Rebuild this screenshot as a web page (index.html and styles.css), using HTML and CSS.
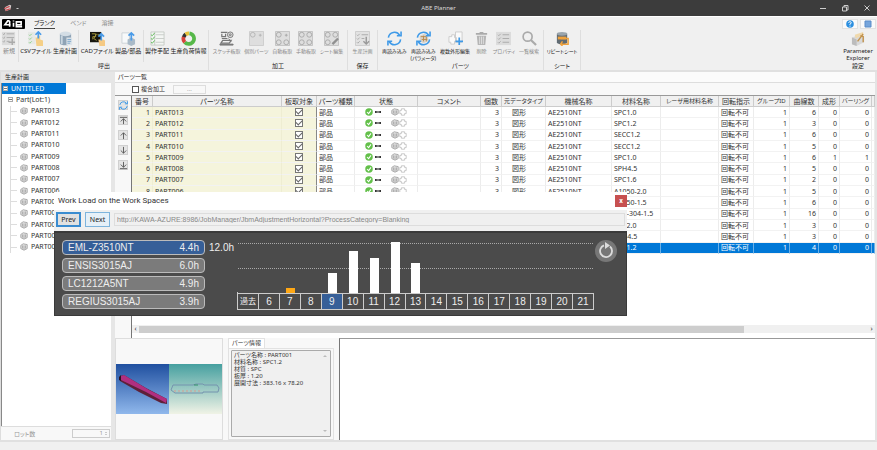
FILE: index.html
```html
<!DOCTYPE html>
<html lang="ja">
<head>
    <meta charset="UTF-8">
    <meta name="viewport" content="width=device-width, initial-scale=1.0">
    <title>ABE Planner</title>
    <link rel="stylesheet" href="styles.css">
</head>
<body>
    <svg class="sprite" aria-hidden="true">
        <symbol id="i-new" viewBox="0 0 16 16"><path d="M1 1h14v14H1z" fill="#dcdcdc"/><path d="M2 3l1 1 1-2M2 7l1 1 1-2M2 11l1 1 1-2M6 3h8M6 7h8M6 11h3" stroke="#aaa" fill="none"/><path d="M12 8v7M8 12h7" stroke="#aaa" stroke-width="1.5"/></symbol>
        <symbol id="i-csv" viewBox="0 0 16 16"><path d="M0 1h8v13H0z" fill="#e6e9e6"/><path d="M1 4l1 1 2-2M1 8l1 1 2-2M1 12l1 1 2-2" stroke="#8ed08a" fill="none"/><path d="M8 7l2 0 0-2h3v4l3 1v6H9z" fill="#f5cf86"/><path d="M11 8V2M8 4l3-3 3 3" stroke="#4a9be8" stroke-width="1.8" fill="none"/></symbol>
        <symbol id="i-db" viewBox="0 0 16 16"><path d="M2 3v10c0 3 12 3 12 0V3" fill="#8fa3b5"/><ellipse cx="8" cy="3" rx="6" ry="2.5" fill="#d3dde5"/><path d="M4 5v9" stroke="#c9d6e0" stroke-width="2"/><path d="M9 7h6v8H9z" fill="#dde4ea"/><path d="M10 9h4M10 11h4M10 13h3" stroke="#77a3c8"/></symbol>
        <symbol id="i-cad" viewBox="0 0 16 16"><path d="M0 1h12v11H0z" fill="#17160f"/><path d="M2 3h4v3H3v3M7 3l-3 5 3 2M8 4h2" stroke="#a89b3b" fill="none"/><path d="M9 9h5l2 1v6h-6z" fill="#f5c983"/><path d="M12 10V4M9 6l3-3 3 3" stroke="#4a9be8" stroke-width="1.8" fill="none"/></symbol>
        <symbol id="i-prod" viewBox="0 0 16 16"><path d="M1 2h8v11H1z" fill="#f7f9fa" stroke="#ccd3d8"/><path d="M7 9l4-2 4 2v5l-4 2-4-2z" fill="#a9bac8"/><path d="M11 10V2M8 5l3-3 3 3" stroke="#4a9be8" stroke-width="1.8" fill="none"/></symbol>
        <symbol id="i-list" viewBox="0 0 16 16"><path d="M1 1h14v14H1z" fill="#f4f6f4" stroke="#c8ccc8"/><path d="M5 1v14M6 4h9M6 8h9M6 12h9" stroke="#c8ccc8" fill="none"/><path d="M1 4l1.500 1L5 2M1 8l1.500 1L5 6M1 12l1.500 1L5 10" stroke="#5fba58" fill="none"/></symbol>
        <symbol id="i-load" viewBox="0 0 16 16" fill="none" stroke-width="4"><path d="M9 2.500a5.700 5.700 0 1 1-5 9.500" stroke="#56b849"/><path d="M4 12a5.700 5.700 0 0 1-1-6" stroke="#d8433c"/><path d="M3 6.500A5.700 5.700 0 0 1 5 3.500" stroke="#333"/><path d="M5 3.600A5.700 5.700 0 0 1 8.500 2.500" stroke="#e8c33a"/></symbol>
        <symbol id="i-sketch" viewBox="0 0 16 16" fill="none" stroke="#777"><path d="M1 14h14v1H1z" fill="#777"/><path d="M2 1.500h7M3 3v3h4V3M3 8h6M4 10h9l-2 3H2z" stroke-width="1.300"/><circle cx="12" cy="4" r="3" fill="#ddd"/><circle cx="12" cy="4" r="1"/><path d="M10 8l3 3"/></symbol>
        <symbol id="i-single" viewBox="0 0 16 16" fill="none" stroke="#b5b5b5"><path d="M.5.5h15v15H.5z" fill="#dedede" stroke="#ccc"/><circle cx="4" cy="4" r="2.500"/><path d="M12 3v3M10.500 4.500h3"/></symbol>
        <symbol id="i-auto" viewBox="0 0 16 16" fill="none" stroke="#aaa"><path d="M.5.5h15v15H.5z" fill="#dedede" stroke="#c2c2c2"/><circle cx="4" cy="4" r="2.600"/><circle cx="4" cy="12" r="2.600"/><circle cx="12" cy="12" r="2.600"/><path d="M12 3v3M10.500 4.500h3"/></symbol>
        <symbol id="i-hand" viewBox="0 0 16 16" fill="none" stroke="#aaa"><path d="M.5.5h15v15H.5z" fill="#dedede" stroke="#c2c2c2"/><circle cx="4" cy="4" r="2.600"/><circle cx="12" cy="4" r="2.600"/><circle cx="4" cy="12" r="2.600"/><circle cx="12" cy="12" r="2.600"/></symbol>
        <symbol id="i-edit" viewBox="0 0 16 16" fill="none" stroke="#aaa"><path d="M.5.5h15v15H.5z" fill="#dedede" stroke="#c2c2c2"/><circle cx="4" cy="4" r="2.600"/><circle cx="12" cy="4" r="2.600"/><circle cx="4" cy="12" r="2.600"/><path d="M9 14l6-6" stroke="#909090" stroke-width="2.500"/></symbol>
        <symbol id="i-save" viewBox="0 0 16 16" fill="none" stroke="#aaa"><path d="M.5.5h15v15H.5z" fill="#e2e2e2" stroke="#ccc"/><path d="M2 4l1 1 2-2M2 8l1 1 2-2M2 12l1 1 2-2M7 4h7M7 8h3"/><path d="M12 6v8M9 11l3 3 3-3" stroke="#999" stroke-width="1.500"/></symbol>
        <symbol id="i-reload" viewBox="0 0 16 16" fill="none" stroke="#3f9ae8" stroke-width="1.700"><path d="M1.500 7A6.500 6.500 0 0 1 13.500 4.500M14.500 9A6.500 6.500 0 0 1 2.500 11.500"/><path d="M15 .5V5h-4.500M1 15.500V11h4.500"/></symbol>
        <symbol id="i-reloadp" viewBox="0 0 16 16"><path d="M4 5l5-2 4 2v6l-5 2-4-2z" fill="#d8d2c8"/><path d="M5 6h6v5M8 5v6M6 9h6" stroke="#b98a4d" fill="none"/><use href="#i-reload"/></symbol>
        <symbol id="i-outline" viewBox="0 0 16 16"><path d="M8 1h7v11H8zM1 6h3V4h3v3h2v4H7v3H3v-2H1z" fill="#fafafa" stroke="#ccc"/><path d="M12 7v8M8 11h8" stroke="#3f9ae8" stroke-width="1.800"/></symbol>
        <symbol id="i-trash" viewBox="0 0 16 16"><path d="M2 3h12M6 2h4" stroke="#aaa" stroke-width="2"/><path d="M3 5h10l-1 10H4z" fill="#b5b5b5"/><path d="M6 6v8M8 6v8M10 6v8" stroke="#dedede"/></symbol>
        <symbol id="i-prop" viewBox="0 0 16 16"><path d="M0 1h16v14H0z" fill="#dcdcdc"/><path d="M2 4l1 1 2-2M2 8l1 1 2-2M2 12l1 1 2-2M7 4h7M7 8h7M7 12h7" stroke="#aaa" fill="none"/></symbol>
        <symbol id="i-search" viewBox="0 0 16 16" fill="none" stroke="#aaa"><circle cx="6" cy="6" r="4.800" stroke-width="1.800"/><path d="M9.500 9.500L15 15" stroke-width="2.300"/></symbol>
        <symbol id="i-repeat" viewBox="0 0 16 16"><path d="M2 3v9c0 3 11 3 11 0V3" fill="#606b73"/><ellipse cx="7.500" cy="3" rx="5.500" ry="2" fill="#9ba5ac"/><path d="M3 6h9v3H3z" fill="#f0a23c"/><path d="M6 8h8v6H6M8 11l-2 3 2 2" stroke="#f0a23c" stroke-width="1.600" fill="none"/></symbol>
        <symbol id="i-param" viewBox="0 0 16 16"><path d="M1 7l8-3 5 2v6l-8 4-5-2z" fill="#d9d9d9"/><path d="M1 7l5 2v7l-5-2z" fill="#bcbcbc"/><path d="M4 4l9-3v3l-8 4z" fill="#f0d9ac"/><path d="M7 11l6-8M10 5l3 1v6" stroke="#c2924b" stroke-width="1.500" fill="none"/></symbol>
        <symbol id="i-part" viewBox="0 0 10 10" fill="none" stroke="#999"><path d="M1 3l3-2 5 1v5L5 9 1 7z" fill="#e8e8e8"/><path d="M3 3v4M5 3v5M7 3v4"/></symbol>
        <symbol id="i-flat" viewBox="0 0 10 10" fill="none" stroke="#bbb"><path d="M3 1h4v2h2v4H7v2H3V7H1V3h2z"/></symbol>
        <symbol id="i-ok" viewBox="0 0 10 10"><circle cx="5" cy="5" r="4.700" fill="#63c04a"/><path d="M2.500 5l2 2 3-4" stroke="#fff" stroke-width="1.300" fill="none"/></symbol>
        <symbol id="i-bend" viewBox="0 0 10 10"><path d="M0 5h3M4 5h2M7 5h3" stroke="#333" stroke-width="3"/></symbol>
        <symbol id="i-top" viewBox="0 0 10 10" fill="none" stroke="#555"><path d="M1 1.500h8M5 9V3M2 6l3-3 3 3"/></symbol>
        <symbol id="i-up" viewBox="0 0 10 10" fill="none" stroke="#555"><path d="M5 9V2M2 5l3-3 3 3"/></symbol>
        <symbol id="i-down" viewBox="0 0 10 10" fill="none" stroke="#555"><path d="M5 1v7M2 5l3 3 3-3"/></symbol>
        <symbol id="i-bottom" viewBox="0 0 10 10" fill="none" stroke="#555"><path d="M1 8.500h8M5 1v6M2 4l3 3 3-3"/></symbol>
    </svg>

    <div class="app">
        <header class="titlebar">
            <div class="title-left">
                <svg class="app-icon" viewBox="0 0 10 10"><path d="M1 4l6-3 2 1-1 5-6 2z" fill="#d9d0cf"/><path d="M0 6l7-3M2 8l6-2" stroke="#c8474c" stroke-width="1.500"/></svg>
                <span class="caret"></span>
            </div>
            <span class="title-text">ABE Planner</span>
            <div class="window-buttons">
                <button type="button" aria-label="Minimize"><svg viewBox="0 0 8 8"><path d="M1 4.500h6"/></svg></button>
                <button type="button" aria-label="Restore"><svg viewBox="0 0 8 8"><path d="M1.500 3h4v4h-4zM3 3V1.500h4V6H5.500"/></svg></button>
                <button type="button" aria-label="Close"><svg viewBox="0 0 8 8"><path d="M1.500 1.500l5 5M6.500 1.500l-5 5"/></svg></button>
            </div>
        </header>

        <nav class="tabs">
            <button type="button" class="logo" aria-label="Menu"><svg viewBox="0 0 24 10"><path d="M8 2H6L3 6h6M8 2v6M12 4v4M12 1.500v1M21 8h-6V3h5v3h-5" fill="none" stroke="#fff" stroke-width="1.700"/></svg></button>
            <a href="#" class="tab active">ブランク</a>
            <a href="#" class="tab">ベンド</a>
            <a href="#" class="tab">溶接</a>
            <div class="help">
                <button type="button" aria-label="Help"><svg viewBox="0 0 8 8"><circle cx="4" cy="4" r="3.800" fill="#2b8fe0"/><path d="M2.700 3c0-2 3-1.500 2.500 0L4 4.300V5M4 5.700v1" stroke="#fff" fill="none"/></svg></button>
                <button type="button" aria-label="Window"><svg viewBox="0 0 8 8"><path d="M1 1h6v6H1z" fill="#76a5dc" stroke="#5a8cc8"/></svg></button>
            </div>
        </nav>

        <section class="ribbon">
            <div class="group group-call">
                <div class="tools">
                    <button type="button" class="tool" disabled><svg><use href="#i-new"/></svg>新規</button>
                    <i class="sep"></i>
                    <button type="button" class="tool"><svg><use href="#i-csv"/></svg>CSVファイル</button>
                    <button type="button" class="tool"><svg><use href="#i-db"/></svg>生産計画</button>
                    <i class="sep"></i>
                    <button type="button" class="tool"><svg><use href="#i-cad"/></svg>CADファイル</button>
                    <button type="button" class="tool"><svg><use href="#i-prod"/></svg>製品/部品</button>
                    <i class="sep"></i>
                    <button type="button" class="tool"><svg><use href="#i-list"/></svg>製作手配</button>
                    <button type="button" class="tool"><svg><use href="#i-load"/></svg>生産負荷情報</button>
                </div>
                <span class="group-name">呼出</span>
            </div>
            <div class="group group-work">
                <div class="tools">
                    <button type="button" class="tool" disabled><svg><use href="#i-sketch"/></svg>スケッチ板取</button>
                    <button type="button" class="tool" disabled><svg><use href="#i-single"/></svg>個別パーツ</button>
                    <button type="button" class="tool" disabled><svg><use href="#i-auto"/></svg>自動板取</button>
                    <button type="button" class="tool" disabled><svg><use href="#i-hand"/></svg>手動板取</button>
                    <button type="button" class="tool" disabled><svg><use href="#i-edit"/></svg>シート編集</button>
                </div>
                <span class="group-name">加工</span>
            </div>
            <div class="group group-save">
                <div class="tools">
                    <button type="button" class="tool" disabled><svg><use href="#i-save"/></svg>生産計画</button>
                </div>
                <span class="group-name">保存</span>
            </div>
            <div class="group group-parts">
                <div class="tools">
                    <button type="button" class="tool"><svg><use href="#i-reload"/></svg>再読み込み</button>
                    <button type="button" class="tool"><svg><use href="#i-reloadp"/></svg>再読み込み<br>(パラメータ)</button>
                    <button type="button" class="tool"><svg><use href="#i-outline"/></svg>複数外形編集</button>
                    <button type="button" class="tool" disabled><svg><use href="#i-trash"/></svg>削除</button>
                    <button type="button" class="tool" disabled><svg><use href="#i-prop"/></svg>プロパティ</button>
                    <button type="button" class="tool" disabled><svg><use href="#i-search"/></svg>一覧検索</button>
                </div>
                <span class="group-name">パーツ</span>
            </div>
            <div class="group group-sheet">
                <div class="tools">
                    <button type="button" class="tool"><svg><use href="#i-repeat"/></svg>リピートシート</button>
                </div>
                <span class="group-name">シート</span>
            </div>
            <div class="group group-setting">
                <div class="tools">
                    <button type="button" class="tool"><svg><use href="#i-param"/></svg>Parameter<br>Explorer</button>
                </div>
                <span class="group-name">設定</span>
            </div>
        </section>

        <main class="workspace">
            <aside class="plan">
                <h2 class="panel-title">生産計画</h2>
                <div class="tree-box">
                    <ul class="tree" id="tree">
                        <li class="root selected"><span class="toggle"></span>UNTITLED</li>
                        <li class="lot"><span class="toggle"></span>Part(Lot:1)</li>
                    </ul>
                </div>
                <div class="lot-row">
                    <label for="lot">ロット数</label>
                    <span class="spin"><input id="lot" type="text" value="1" disabled><span class="spin-arrows"><i></i><i class="dn"></i></span></span>
                </div>
            </aside>

            <div class="content">
                <h2 class="panel-title parts-title">パーツ一覧</h2>
                <div class="options">
                    <input type="checkbox" id="combo"><label for="combo">複合加工</label>
                    <button type="button" disabled>...</button>
                </div>
                <div class="parts">
                    <div class="side-tools">
                        <button type="button" aria-label="更新"><svg><use href="#i-reload"/></svg></button>
                        <button type="button" aria-label="先頭へ"><svg><use href="#i-top"/></svg></button>
                        <button type="button" aria-label="上へ"><svg><use href="#i-up"/></svg></button>
                        <button type="button" aria-label="下へ"><svg><use href="#i-down"/></svg></button>
                        <button type="button" aria-label="末尾へ"><svg><use href="#i-bottom"/></svg></button>
                    </div>
                    <div class="grid-box">
                        <table class="parts-table">
                            <colgroup>
                                <col class="w21"><col><col class="w35"><col class="w38"><col class="w63"><col class="w63"><col class="w21"><col class="w44"><col class="w66"><col class="w49"><col class="w58"><col class="w35"><col class="w36"><col class="w29"><col class="w21"><col class="w32"><col class="w3">
                            </colgroup>
                            <thead>
                                <tr><th>番号</th><th>パーツ名称</th><th>板取対象</th><th>パーツ種類</th><th>状態</th><th>コメント</th><th>個数</th><th class="small">元データタイプ</th><th>機械名称</th><th>材料名称</th><th class="small">レーザ用材料名称</th><th>回転指示</th><th class="small">グループID</th><th>曲線数</th><th>成形</th><th class="small">バーリング</th><th></th></tr>
                            </thead>
                            <tbody id="rows"></tbody>
                        </table>
                        <div class="hscroll"><span class="arrow">‹</span><div class="track"><div class="thumb"></div></div><span class="arrow">›</span></div>
                    </div>
                </div>

                <div class="details">
                    <div class="preview">
                        <svg class="view solid" viewBox="0 0 53 50"><path d="M4 12l4-1 22 13 21 11v5l-6-1-22-11-19-11z" fill="#5e2038"/><path d="M5 12l3-1 25 15 18 9-1 4-20-11L5 16z" fill="#b02f80"/><path d="M3 13l2-2v6l-2-1z" fill="#2b1320"/></svg>
                        <svg class="view flat" viewBox="0 0 53 50" fill="none"><path d="M4 21h20l3-1h7l1 1h13l2 3-1 4H34v1H6l-4-3z" stroke="#7593ae"/><path d="M5 27h28" stroke="#d59b90" stroke-dasharray="2 2"/><path d="M8 24h24M36 24h10" stroke="#9dc5c6" stroke-dasharray="1 3"/><path d="M25 21h4" stroke="#35906b"/></svg>
                    </div>
                    <div class="info">
                        <div class="info-tab">パーツ情報</div>
                        <div class="info-page">
                            <div class="info-box">
                                <div class="info-text">
                                    <p>パーツ名称 : PART001</p>
                                    <p>材料名称 : SPC1.2</p>
                                    <p>材質 : SPC</p>
                                    <p>板厚 : 1.20</p>
                                    <p>展開寸法 : 383.16 x 78.20</p>
                                </div>
                                <div class="vscroll"><i></i><i class="dn"></i></div>
                            </div>
                        </div>
                    </div>
                    <div class="sheet-view"></div>
                </div>
            </div>
        </main>
        <footer class="statusbar"></footer>

        <div class="dialog" role="dialog" aria-labelledby="dialog-title">
            <div class="dialog-head">
                <span id="dialog-title">Work Load on the Work Spaces</span>
                <button type="button" class="dialog-close" aria-label="Close">x</button>
            </div>
            <div class="dialog-nav">
                <button type="button" class="focused">Prev</button>
                <button type="button">Next</button>
                <input type="text" aria-label="URL" readonly value="http://KAWA-AZURE:8986/JobManager/JbmAdjustmentHorizontal?ProcessCategory=Blanking">
            </div>
            <div class="load">
                <div class="machines">
                    <button type="button" class="machine current"><span>EML-Z3510NT</span><span>4.4h</span></button>
                    <button type="button" class="machine"><span>ENSIS3015AJ</span><span>6.0h</span></button>
                    <button type="button" class="machine"><span>LC1212A5NT</span><span>4.9h</span></button>
                    <button type="button" class="machine"><span>REGIUS3015AJ</span><span>3.9h</span></button>
                </div>
                <span class="scale">12.0h</span>
                <div class="chart" id="chart"></div>
                <button type="button" class="refresh" aria-label="Refresh"><svg viewBox="0 0 22 22"><circle cx="11" cy="11" r="11" fill="#777"/><path d="M15 6.500A6 6 0 1 1 9 5.400" fill="none" stroke="#ddd" stroke-width="1.800"/><path d="M10 2l5 3.500-5 3.500z" fill="#ddd"/></svg></button>
            </div>
        </div>
    </div>

    <script>
        // number, material, curves, forming, burring
        const parts = [
            ['013', 'SPC1.0', 6, 0, 0],
            ['012', 'SPC1.2', 3, 0, 0],
            ['011', 'SECC1.2', 6, 0, 0],
            ['010', 'SECC1.2', 5, 0, 0],
            ['009', 'SPC1.0', 6, 1, 1],
            ['008', 'SPH4.5', 5, 0, 0],
            ['007', 'SPC1.6', 2, 0, 0],
            ['006', 'A1050-2.0', 5, 0, 0],
            ['005', 'A1050-1.5', 6, 0, 0],
            ['004', 'SUS-304-1.5', 16, 0, 0],
            ['003', 'SPC2.0', 3, 0, 0],
            ['002', 'SPH4.5', 3, 0, 0],
            ['001', 'SPC1.2', 4, 0, 0]
        ];
        const tree = document.getElementById('tree');
        const rows = document.getElementById('rows');

        parts.forEach(([no, material, curves, forming, burring], i) => {
            tree.insertAdjacentHTML('beforeend', `<li class="part"><svg><use href="#i-part"/></svg>PART${no}</li>`);
            rows.insertAdjacentHTML('beforeend', `
                <tr class="${no === '001' ? 'selected' : ''}">
                    <td class="num key">${i + 1}</td><td class="key">PART${no}</td>
                    <td class="key mid edge"><input type="checkbox" checked aria-label="板取対象 PART${no}"></td>
                    <td>部品</td>
                    <td><div class="state"><svg><use href="#i-ok"/></svg><svg class="bend"><use href="#i-bend"/></svg><svg><use href="#i-part"/></svg><svg><use href="#i-flat"/></svg></div></td>
                    <td></td><td class="num">3</td><td class="type">図形</td><td>AE2510NT</td><td>${material}</td><td></td>
                    <td>回転不可</td><td class="num">1</td><td class="num">${curves}</td><td class="num">${forming}</td><td class="num">${burring}</td><td></td>
                </tr>`);
        });

        // hours booked per day
        const days = ['過去', 6, 7, 8, 9, 10, 11, 12, 13, 14, 15, 16, 17, 18, 19, 20, 21];
        const hours = { 7: 1.2, 9: 4.6, 10: 9.8, 11: 8.2, 12: 12, 13: 7 };
        document.getElementById('chart').innerHTML = days.map(d => `
            <div class="day">
                <div class="plot">${hours[d] ? `<div class="bar${d === 7 ? ' late' : ''}" style="height: ${hours[d] / 12 * 100}%"></div>` : ''}</div>
                <div class="date${d === 9 ? ' today' : ''}${d === '過去' ? ' past' : ''}">${d}</div>
            </div>`).join('');
    </script>
</body>
</html>
```

FILE: styles.css
```css
* {
    box-sizing: border-box;
}
body {
    margin: 0;
    font-family: "Noto Sans", "Noto Sans CJK JP", sans-serif;
    font-size: 7px;
    line-height: 10px;
    color: #333;
    background-color: #f0f0f0;
    font-feature-settings: "palt";
}
button, input {
    font: inherit;
    font-feature-settings: inherit;
    color: inherit;
    margin: 0;
    padding: 0;
    border: none;
    background: none;
}
h2, p, ul {
    margin: 0;
    padding: 0;
    font-size: 7px;
    font-weight: normal;
}
svg {
    display: block;
    flex: none;
}
.sprite {
    position: absolute;
    width: 0;
    height: 0;
}
.app {
    position: relative;
    display: flex;
    flex-direction: column;
    height: 100vh;
    overflow: hidden;
}

/* title bar */
.titlebar {
    display: grid;
    grid-template-columns: 1fr auto 1fr;
    align-items: center;
    height: 16px;
    flex: none;
    background-color: #3c3c3c;
    color: #ddd;
}
.title-text {
    font-size: 6px;
}
.title-left {
    display: flex;
    align-items: center;
    gap: 4px;
    padding-left: 4px;
}
.app-icon {
    width: 8px;
    height: 8px;
}
.caret {
    border: 1px solid transparent;
    border-top-color: #ccc;
    border-bottom: none;
    width: 3px;
}
.window-buttons {
    display: flex;
    justify-content: flex-end;
    gap: 14px;
    padding-right: 6px;
}
.window-buttons svg {
    width: 8px;
    height: 8px;
    fill: none;
    stroke: #ccc;
}

/* ribbon */
.tabs {
    display: flex;
    align-items: center;
    height: 14px;
    flex: none;
    padding: 0 1px 0 2px;
    border-top: 1px solid #fff;
}
.logo {
    width: 23px;
    height: 10px;
    margin-right: 9px;
    background-color: #000;
    border-radius: 1px;
}
.tab {
    margin-right: 15px;
    line-height: 10px;
    font-size: 6px;
    color: #888;
    text-decoration: none;
    border-bottom: 1px solid transparent;
}
.tab.active {
    color: #222;
    border-bottom-color: #444;
}
.help {
    display: flex;
    gap: 2px;
    margin-left: auto;
}
.help button {
    display: flex;
    justify-content: center;
    align-items: center;
    width: 16px;
    height: 10px;
    background-color: #fafafa;
    border: 1px solid #e2e2e2;
}
.help svg {
    width: 8px;
    height: 8px;
}
.ribbon {
    display: flex;
    height: 42px;
    flex: none;
    font-size: 5px;
    color: #222;
    border-bottom: 2px solid #e0e0e0;
}
.group {
    display: flex;
    flex-direction: column;
    align-items: center;
    justify-content: space-between;
    flex: none;
    border-right: 1px solid #dedede;
}
.group-call {
    width: 209px;
    font-size: 6px;
}
.group-work { width: 139px; }
.group-save { width: 30px; }
.group-parts { width: 166px; }
.group-sheet { width: 37px; }
.group-setting {
    width: 38px;
    margin-left: auto;
    font-size: 6px;
    border-right: none;
}
.tools {
    display: flex;
    align-self: stretch;
    justify-content: space-evenly;
    height: 32px;
}
.tool {
    display: flex;
    flex-direction: column;
    align-items: center;
    justify-content: flex-start;
    line-height: 7px;
    padding-top: 1px;
    white-space: nowrap;
}
.tool svg {
    width: 15px;
    height: 15px;
    margin-bottom: 2px;
}
.tool:disabled {
    color: #888;
}
.sep {
    width: 1px;
    background-color: #dedede;
}
.group-name {
    font-size: 6px;
    line-height: 7px;
}

/* plan tree */
.workspace {
    display: grid;
    grid-template-columns: 115px 1fr;
    flex: 1;
    min-height: 0;
    border-right: 2px solid #e4e4e4;
    border-bottom: 2px solid #e0e0e0;
    background-color: #f8f8f8;
}
.plan {
    display: flex;
    flex-direction: column;
    border-left: 1px solid #ddd;
    border-right: 4px solid #e6e6e6;
    background-color: #f8f8f8;
}
.panel-title {
    height: 11px;
    padding-left: 4px;
    font-size: 6px;
    color: #222;
    background-color: #e6e6e6;
}
.tree-box {
    flex: 1;
    background-color: #fff;
    border-left: 1px solid #888;
}
.tree {
    display: grid;
    grid-auto-rows: 1fr;
    height: 170px;
    list-style: none;
}
.tree li {
    display: flex;
    align-items: center;
}
.tree .root {
    width: 64px;
    padding-left: 1px;
    gap: 3px;
}
.tree .lot {
    padding-left: 6px;
    gap: 3px;
}
.tree .part {
    gap: 3px;
    margin-left: 8px;
    border-left: 1px solid #ddd;
}
.tree .part::before {
    content: "";
    width: 6px;
    border-top: 1px solid #ddd;
}
.tree svg {
    width: 8px;
    height: 8px;
}
.tree .selected {
    color: #fff;
    background-color: #0078d7;
}
.toggle {
    width: 5px;
    height: 5px;
    border: 1px solid #aaa;
    background: linear-gradient(#777, #777) center / 3px 1px no-repeat #fff;
}
.lot-row {
    display: flex;
    align-items: center;
    justify-content: space-between;
    height: 14px;
    padding: 0 1px 0 13px;
    font-size: 6px;
    border-top: 1px solid #ddd;
    color: #999;
}
.spin {
    display: flex;
    width: 38px;
    height: 9px;
    border: 1px solid #ccc;
}
.spin input {
    flex: 1;
    min-width: 0;
    text-align: right;
    color: #999;
    line-height: 7px;
}
.spin-arrows {
    display: flex;
    flex-direction: column;
    justify-content: space-evenly;
    padding: 0 2px;
}
.spin-arrows i {
    border: 1px solid transparent;
    border-bottom-color: #999;
    border-top: none;
}
.spin-arrows .dn {
    border-top: 1px solid #999;
    border-bottom: none;
}

/* parts list */
.content {
    display: flex;
    flex-direction: column;
    min-width: 0;
}
.parts-title {
    padding-left: 3px;
    background-color: #fbfbfb;
    border-bottom: 1px solid #ddd;
}
.options {
    display: flex;
    align-items: center;
    height: 12px;
    padding-left: 17px;
    font-size: 6px;
}
.options input {
    appearance: none;
    width: 7px;
    height: 7px;
    margin-right: 2px;
    border: 1px solid #555;
    background-color: #fff;
}
.options button {
    width: 33px;
    height: 9px;
    margin-left: 8px;
    line-height: 6px;
    color: #999;
    border: 1px solid #ddd;
}
.parts {
    display: flex;
    height: 243px;
    border-top: 1px solid #999;
}
.side-tools {
    display: flex;
    flex-direction: column;
    gap: 5px;
    width: 16px;
    padding: 4px 3px;
}
.side-tools button {
    display: flex;
    align-items: center;
    justify-content: center;
    height: 10px;
    background-color: #e4e4e4;
    border: 1px solid #d0d0d0;
}
.side-tools svg {
    width: 9px;
    height: 9px;
}
.grid-box {
    display: flex;
    flex-direction: column;
    flex: 1;
    min-width: 0;
    background-color: #fff;
    border-left: 1px solid #777;
}
.parts-table {
    width: 100%;
    height: 158px;
    table-layout: fixed;
    border-collapse: separate;
    border-spacing: 0;
    line-height: 9px;
}
.w3 { width: 3px; }
.w21 { width: 21px; }
.w29 { width: 29px; }
.w32 { width: 32px; }
.w35 { width: 35px; }
.w36 { width: 36px; }
.w38 { width: 38px; }
.w44 { width: 44px; }
.w49 { width: 49px; }
.w58 { width: 58px; }
.w63 { width: 63px; }
.w66 { width: 66px; }
.parts-table th, .parts-table td {
    padding: 0 2px;
    overflow: hidden;
    white-space: nowrap;
    border-right: 1px solid #ececec;
    border-bottom: 1px solid #f2f2f2;
}
.parts-table th {
    height: 11px;
    padding: 0;
    font-weight: normal;
    background-color: #f0f0f0;
    border-right-color: #ccc;
    border-bottom-color: #ccc;
}
.parts-table .small {
    font-size: 6px;
}
.parts-table .key {
    background-color: #f5f4dc;
    border-right-color: #eeedd2;
}
.parts-table .edge {
    border-right-color: #888;
}
.parts-table .num {
    text-align: right;
}
.parts-table .mid {
    text-align: center;
}
.parts-table .type {
    padding-left: 10px;
}
.parts-table input {
    appearance: none;
    display: block;
    width: 8px;
    height: 8px;
    margin: 0 auto;
    border: 1px solid #777;
    background-color: #fff;
}
.parts-table input:checked::before {
    content: "";
    display: block;
    width: 5px;
    height: 3px;
    border: solid #666;
    border-width: 0 0 1px 1px;
    transform: rotate(-45deg);
}
.parts-table .selected td {
    color: #fff;
    background-color: #0078d7;
    border-right-color: #6bb0e8;
}
.state {
    display: flex;
    align-items: center;
    padding-left: 8px;
}
.state svg {
    width: 8px;
    height: 8px;
}
.state .bend {
    width: 6px;
    height: 6px;
    margin: 0 10px 0 2px;
}
.hscroll {
    display: flex;
    align-items: center;
    height: 8px;
    margin-top: auto;
    margin-bottom: 5px;
    background-color: #f0f0f0;
}
.hscroll .arrow {
    width: 7px;
    text-align: center;
}
.track {
    flex: 1;
    height: 7px;
}
.thumb {
    width: 83%;
    height: 7px;
    background-color: #cdcdcd;
}

/* details */
.details {
    display: grid;
    grid-template-columns: 108px 106px 1fr;
    gap: 5px;
    flex: 1;
    min-height: 0;
}
.preview {
    display: flex;
    align-items: center;
    border: 1px solid #ddd;
}
.view {
    width: 50%;
    height: 50px;
}
.solid {
    background: linear-gradient(#2050a0, #90b8ec);
}
.flat {
    background: linear-gradient(#46a0a0, #f0f3e6);
}
.info {
    display: flex;
    flex-direction: column;
}
.info-tab {
    align-self: flex-start;
    height: 10px;
    padding: 0 3px;
    font-size: 6px;
    line-height: 9px;
    background-color: #fff;
    border: 1px solid #e2e2e2;
    border-bottom: none;
}
.info-page {
    display: flex;
    flex: 1;
    padding: 1px 2px 2px;
    border: 1px solid #e2e2e2;
}
.info-box {
    display: flex;
    justify-content: space-between;
    flex: 1;
    padding: 1px 2px;
    background-color: #f0f0f0;
    border: 1px solid #aaa;
    border-radius: 1px;
}
.info-text {
    line-height: 7px;
}
.info-text p {
    font-size: 6px;
}
.vscroll {
    display: flex;
    flex-direction: column;
    justify-content: space-between;
    padding: 3px 1px;
}
.vscroll i {
    width: 4px;
    border: 2px solid transparent;
    border-bottom-color: #bbb;
    border-top: none;
}
.vscroll .dn {
    border-top: 2px solid #bbb;
    border-bottom: none;
}
.sheet-view {
    background-color: #fff;
    border-top: 1px solid #999;
    border-left: 1px solid #777;
}
.statusbar {
    height: 8px;
    flex: none;
}

/* work load dialog, floats over the main window */
.dialog {
    position: absolute;
    left: 54px;
    top: 192px;
    width: 573px;
    background-color: #f0f0f0;
}
.dialog-head {
    display: flex;
    justify-content: space-between;
    align-items: center;
    height: 18px;
    padding-left: 4px;
    font-family: Roboto, sans-serif;
    font-size: 8px;
    background-color: #fff;
}
.dialog-close {
    width: 12px;
    height: 12px;
    line-height: 8px;
    font-size: 7px;
    font-weight: bold;
    color: #fff;
    background-color: #c75050;
}
.dialog-nav {
    display: flex;
    align-items: center;
    gap: 4px;
    height: 21px;
    padding: 0 2px 2px;
}
.dialog-nav button {
    width: 25px;
    height: 15px;
    color: #222;
    background-color: #e6f0f8;
    border: 1px solid #7eb4dc;
}
.dialog-nav .focused {
    background-color: #e1e1e1;
    border: 2px solid #3a8cd0;
}
.dialog-nav input {
    flex: 1;
    height: 13px;
    padding: 0 2px;
    font-family: "Liberation Sans", sans-serif;
    color: #888;
    border: 1px solid #ddd;
}
.load {
    display: flex;
    align-items: flex-start;
    height: 85px;
    padding: 7px 9px 0 7px;
    font-family: "Liberation Sans", "Noto Sans CJK JP", sans-serif;
    font-size: 10px;
    color: #eee;
    background-color: #4b4b4b;
    border: 1px solid #3a3a3a;
    border-top-width: 2px;
}
.machines {
    display: flex;
    flex-direction: column;
    gap: 3px;
    width: 143px;
    margin-right: 4px;
}
.machine {
    display: flex;
    justify-content: space-between;
    align-items: center;
    height: 15px;
    padding: 0 5px;
    background-color: #7b7b7b;
    border: 1px solid #bbb;
    border-radius: 4px;
}
.machine.current {
    background-color: #365f98;
}
.scale {
    width: 28px;
    line-height: 15px;
}
.chart {
    display: flex;
    flex: 1;
    margin-top: 2px;
    border-left: 1px solid #ccc;
    border-image: linear-gradient(transparent 50px, #ccc 50px) 1;
    background:
        repeating-linear-gradient(90deg, #aaa 0 1px, transparent 1px 2px) 0 1px / 100% 1px no-repeat,
        repeating-linear-gradient(90deg, #aaa 0 1px, transparent 1px 2px) 0 26px / 100% 1px no-repeat;
}
.day {
    flex: 1;
}
.plot {
    display: flex;
    align-items: flex-end;
    justify-content: center;
    height: 51px;
}
.bar {
    width: 9px;
    background-color: #fff;
}
.bar.late {
    background-color: #ffa815;
}
.date {
    height: 17px;
    line-height: 15px;
    text-align: center;
    border: 1px solid #ccc;
    border-left: none;
}
.date.today {
    background-color: #365f98;
}
.date.past {
    font-size: 8px;
}
.refresh {
    margin-left: 1px;
}
.refresh svg {
    width: 22px;
    height: 22px;
}
```
